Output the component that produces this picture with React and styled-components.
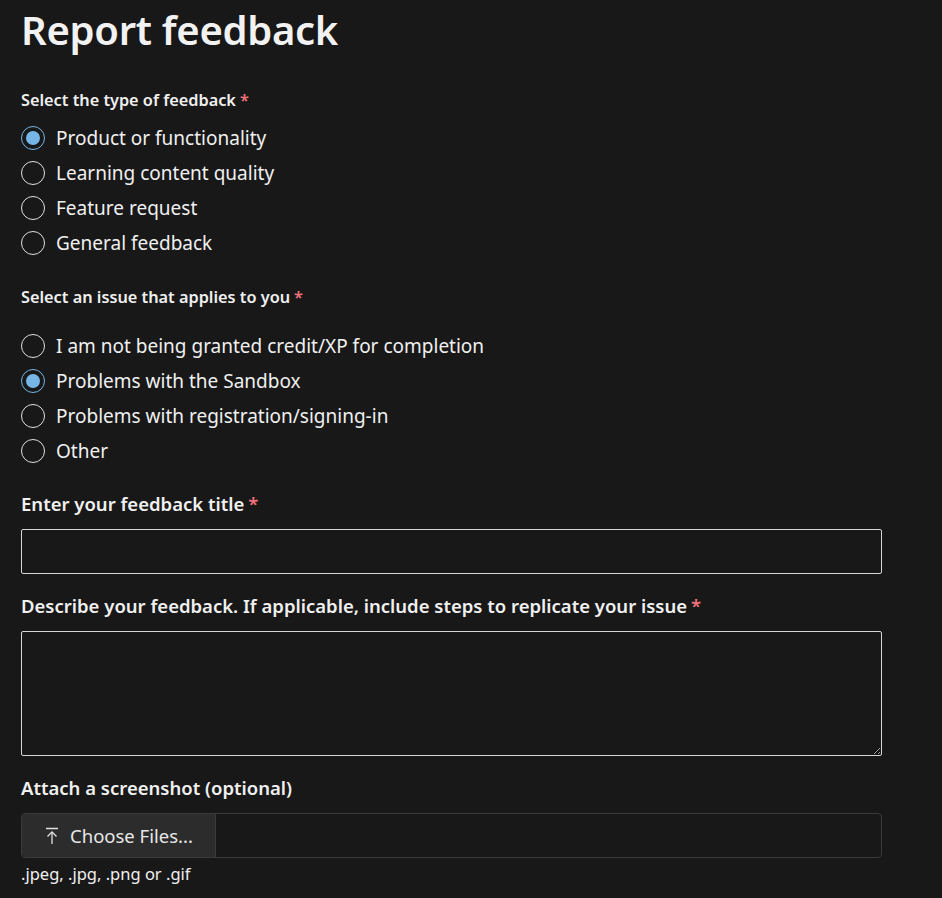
import React, {useState} from 'react';
import styled, {createGlobalStyle} from 'styled-components';

const GlobalStyle = createGlobalStyle`
    html, body {
        margin: 0;
        padding: 0;
        background: #181818;
    }
    body {
        font-family: "Noto Sans", "Open Sans", sans-serif;
        color: #f0f0f0;
    }
`;

const Page = styled.div`
    padding: 0 60px 0 21px;
    min-height: 898px;
    box-sizing: border-box;
`;

const Title = styled.h1`
    margin: 0;
    padding-top: 2px;
    font-size: 40px;
    line-height: 56px;
    font-weight: 600;
    color: #f2f2f2;
    letter-spacing: -0.3px;
`;

const Fieldset = styled.fieldset`
    border: 0;
    margin: ${p => p.$top}px 0 0 0;
    padding: 0;
`;

const Legend = styled.legend`
    padding: 0;
    font-size: 16.3px;
    font-weight: 600;
    line-height: 20px;
    margin-bottom: ${p => p.$gap}px;
`;

const Required = styled.span`
    color: #f1707b;
    margin-left: 4px;
`;

const RadioList = styled.div`
    display: flex;
    flex-direction: column;
`;

const RadioRow = styled.label`
    display: flex;
    align-items: center;
    gap: 11px;
    height: 35px;
    font-size: 19px;
    cursor: pointer;
`;

const Dot = styled.span`
    width: 22px;
    height: 22px;
    border-radius: 50%;
    border: 1px solid ${p => p.$on ? '#75b6e7' : '#e0e0e0'};
    display: flex;
    align-items: center;
    justify-content: center;
    flex-shrink: 0;

    &::after {
        content: "";
        width: 14px;
        height: 14px;
        border-radius: 50%;
        background: #75b6e7;
        display: ${p => p.$on ? 'block' : 'none'};
    }
`;

const HiddenInput = styled.input`
    position: absolute;
    opacity: 0;
    width: 0;
    height: 0;
`;

const Field = styled.div`
    margin-top: ${p => p.$top}px;
`;

const FieldLabel = styled.label`
    display: block;
    font-size: 18.5px;
    font-weight: 600;
    line-height: 24px;
    margin-bottom: 13px;
`;

const TextInput = styled.input`
    display: block;
    width: 100%;
    height: 45px;
    box-sizing: border-box;
    background: #181818;
    border: 1px solid #d6d6d6;
    border-radius: 2px;
    color: #f0f0f0;
    font: inherit;
    font-size: 16px;
    padding: 0 10px;
    outline: none;
`;

const TextArea = styled.textarea`
    display: block;
    width: 100%;
    height: 125px;
    box-sizing: border-box;
    background: #181818;
    border: 1px solid #d6d6d6;
    border-radius: 2px;
    color: #f0f0f0;
    font: inherit;
    font-size: 16px;
    padding: 8px 10px;
    outline: none;
`;

const FileBox = styled.div`
    display: flex;
    height: 45px;
    box-sizing: border-box;
    border: 1px solid #3a3a3a;
    border-radius: 4px;
    overflow: hidden;
`;

const FileButton = styled.button`
    display: flex;
    align-items: center;
    gap: 11px;
    width: 194px;
    padding: 0 0 0 23px;
    background: #2c2c2c;
    border: 0;
    border-right: 1px solid #3a3a3a;
    color: #e8e8e8;
    font: inherit;
    font-size: 18.5px;
    cursor: pointer;
`;

const Hint = styled.div`
    font-size: 16.5px;
    line-height: 22px;
    margin-top: 5px;
    color: #f0f0f0;
`;

const typeOptions = [
    'Product or functionality',
    'Learning content quality',
    'Feature request',
    'General feedback',
];

const issueOptions = [
    'I am not being granted credit/XP for completion',
    'Problems with the Sandbox',
    'Problems with registration/signing-in',
    'Other',
];

const RadioGroup = ({name, options, value, onChange}) => (
    <RadioList>
        {options.map(opt => (
            <RadioRow key={opt}>
                <HiddenInput type="radio" name={name} checked={value === opt} onChange={() => onChange(opt)}/>
                <Dot $on={value === opt}/>
                {opt}
            </RadioRow>
        ))}
    </RadioList>
);

const UploadIcon = () => (
    <svg width="14" height="18" viewBox="0 0 14 18" fill="none" stroke="#e0e0e0" strokeWidth="1.3">
        <path d="M1 1.5h12"/>
        <path d="M7 17V5"/>
        <path d="M2.5 9.5L7 5l4.5 4.5"/>
    </svg>
);

const App = () => {
    const [type, setType] = useState(typeOptions[0]);
    const [issue, setIssue] = useState(issueOptions[1]);

    return (
        <Page>
            <GlobalStyle/>
            <Title>Report feedback</Title>

            <Fieldset $top={32}>
                <Legend $gap={10}>Select the type of feedback<Required>*</Required></Legend>
                <RadioGroup name="type" options={typeOptions} value={type} onChange={setType}/>
            </Fieldset>

            <Fieldset $top={27}>
                <Legend $gap={21}>Select an issue that applies to you<Required>*</Required></Legend>
                <RadioGroup name="issue" options={issueOptions} value={issue} onChange={setIssue}/>
            </Fieldset>

            <Field $top={24}>
                <FieldLabel>Enter your feedback title<Required>*</Required></FieldLabel>
                <TextInput type="text"/>
            </Field>

            <Field $top={20}>
                <FieldLabel>Describe your feedback. If applicable, include steps to replicate your issue<Required>*</Required></FieldLabel>
                <TextArea/>
            </Field>

            <Field $top={20}>
                <FieldLabel>Attach a screenshot (optional)</FieldLabel>
                <FileBox>
                    <FileButton type="button"><UploadIcon/>Choose Files...</FileButton>
                </FileBox>
                <Hint>.jpeg, .jpg, .png or .gif</Hint>
            </Field>
        </Page>
    );
};

export default App;
